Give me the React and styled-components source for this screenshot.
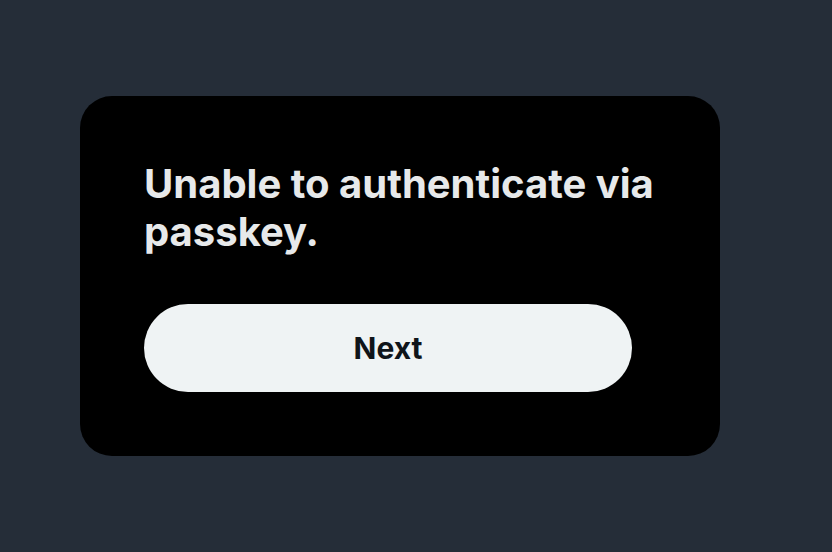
import React from 'react';
import styled, { createGlobalStyle } from 'styled-components';

const GlobalStyle = createGlobalStyle`
  html, body {
    margin: 0;
    padding: 0;
    background: #252d38;
  }
  * {
    box-sizing: border-box;
  }
`;

const Screen = styled.div`
  width: 832px;
  height: 552px;
  display: flex;
  align-items: center;
  padding-left: 80px;
  background: #252d38;
  font-family: Inter, "Liberation Sans", sans-serif;
`;

const Dialog = styled.div`
  width: 640px;
  padding: 64px;
  background: #000000;
  border-radius: 32px;
  display: flex;
  flex-direction: column;
  gap: 48px;
`;

const Title = styled.h1`
  margin: 0;
  color: #e7e9ea;
  font-size: 40px;
  line-height: 48px;
  font-weight: 700;
  letter-spacing: 0;
`;

const Button = styled.button`
  width: 488px;
  height: 88px;
  border: none;
  border-radius: 44px;
  background: #eff3f4;
  color: #0f1419;
  font-family: inherit;
  font-size: 30px;
  font-weight: 700;
  cursor: pointer;
`;

export default function App() {
  return (
    <>
      <GlobalStyle />
      <Screen>
        <Dialog>
          <Title>Unable to authenticate via passkey.</Title>
          <Button>Next</Button>
        </Dialog>
      </Screen>
    </>
  );
}
